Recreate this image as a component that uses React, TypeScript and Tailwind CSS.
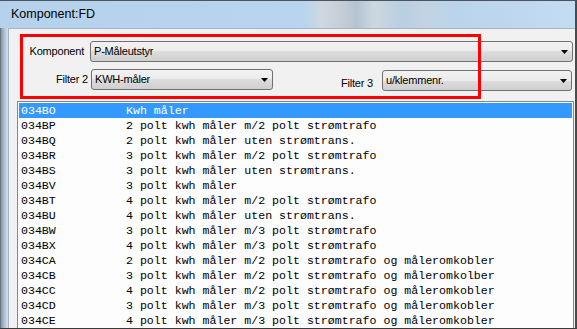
const ROWS: [string, string][] = [
  ["034BO", "Kwh måler"],
  ["034BP", "2 polt kwh måler m/2 polt strømtrafo"],
  ["034BQ", "2 polt kwh måler uten strømtrans."],
  ["034BR", "3 polt kwh måler m/2 polt strømtrafo"],
  ["034BS", "3 polt kwh måler uten strømtrans."],
  ["034BV", "3 polt kwh måler"],
  ["034BT", "4 polt kwh måler m/2 polt strømtrafo"],
  ["034BU", "4 polt kwh måler uten strømtrans."],
  ["034BW", "3 polt kwh måler m/3 polt strømtrafo"],
  ["034BX", "4 polt kwh måler m/3 polt strømtrafo"],
  ["034CA", "2 polt kwh måler m/2 polt strømtrafo og måleromkobler"],
  ["034CB", "3 polt kwh måler m/2 polt strømtrafo og måleromkolber"],
  ["034CC", "4 polt kwh måler m/2 polt strømtrafo og måleromkobler"],
  ["034CD", "3 polt kwh måler m/3 polt strømtrafo og måleromkobler"],
  ["034CE", "4 polt kwh måler m/3 polt strømtrafo og måleromkobler"],
];

function Arrow() {
  return (
    <svg width="7" height="4" viewBox="0 0 7 4" aria-hidden="true">
      <path d="M0 0h7L3.5 4z" fill="#000" />
    </svg>
  );
}

function Combo({ value, className }: { value: string; className: string }) {
  return (
    <div
      className={
        "flex h-[21px] items-center justify-between rounded-[3px] border border-[#707070] bg-[linear-gradient(to_bottom,#f2f2f2_0%,#ebebeb_50%,#dddddd_50%,#cfcfcf_100%)] pl-[3px] pr-[4px] text-[11px] text-black " +
        className
      }
    >
      <span>{value}</span>
      <Arrow />
    </div>
  );
}

export default function App() {
  return (
    <div className="relative flex h-[329px] w-[577px] flex-col overflow-hidden border-t border-b border-r-2 border-t-[#4a5461] border-b-[#3a3a3a] border-r-[#4a4a4a] bg-[#bcd5ed] font-['Liberation_Sans',Arial,sans-serif]">
      {/* title bar */}
      <div className="flex h-[27px] shrink-0 items-center bg-[linear-gradient(to_right,#b5d1ec_0%,#b9d4ee_53%,#cfd8e0_56%,#c3ccd6_60%,#b4c3d2_62%,#cdd7e0_65%,#b9cfe3_70%,#c2d3e3_74%,#bad4ec_80%,#c3dcf2_100%)] pl-[11px] text-[12.5px] text-black">
        Komponent:FD
      </div>

      <div className="flex min-h-0 flex-1">
        {/* left frame */}
        <div className="w-[8px] shrink-0 bg-[linear-gradient(to_right,#58626e_0%,#8f9fb0_20%,#b4c6d8_60%,#d5e1ec_100%)]" />

        {/* client */}
        <div className="flex min-w-0 flex-1 flex-col overflow-hidden border-l border-t border-[#a7b3c0] bg-[#f2f1f2] tracking-[-0.2px]">
          <div className="mt-[12px] flex h-[21px] items-center">
            <div className="w-[75px] text-right text-[11px] text-black">Komponent</div>
            <Combo value="P-Måleutstyr" className="ml-[6px] w-[483px]" />
          </div>

          <div className="mt-[7px] flex h-[22px] items-start">
            <div className="flex h-[21px] w-[79px] items-center justify-end text-[11px] text-black">
              Filter 2
            </div>
            <Combo value="KWH-måler" className="ml-[3px] w-[182px]" />
            <div className="mt-[4px] flex h-[21px] w-[100px] items-center justify-end text-[11px] text-black">
              Filter 3
            </div>
            <Combo value="u/klemmenr." className="ml-[9px] mt-[1px] w-[190px]" />
          </div>

          {/* list */}
          <div className="ml-[8px] mt-[10px] h-[260px] w-[557px] shrink-0 border border-[#828790] bg-[#fcfdfc] px-[1px] pt-[1px] font-['Liberation_Mono','Courier_New',monospace] text-[11.6px] tracking-normal">
            {ROWS.map(([code, desc], i) => (
              <div
                key={code}
                className={
                  i === 0
                    ? "flex h-[15px] items-center whitespace-pre bg-[#3399ff] pl-[2px] text-white"
                    : "flex h-[15px] items-center whitespace-pre pl-[2px] text-black"
                }
              >
                <span className="w-[105px] shrink-0">{code}</span>
                <span>{desc}</span>
              </div>
            ))}
          </div>
        </div>
      </div>

      {/* annotation */}
      <div className="absolute left-[20px] top-[33px] h-[65px] w-[461px] border-[3px] border-[#ff0000]" />
    </div>
  );
}
